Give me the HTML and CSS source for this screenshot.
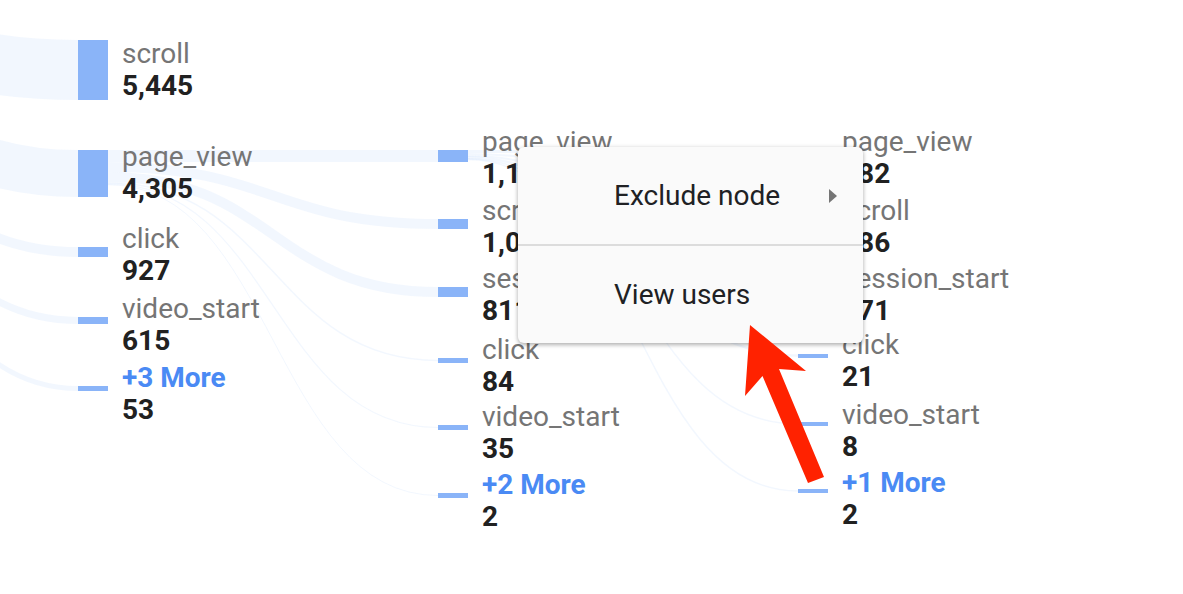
FILE: index.html
```html
<!DOCTYPE html>
<html lang="en">
<head>
  <meta charset="UTF-8">
  <title>Path exploration</title>
  <link rel="stylesheet" href="styles.css">
</head>
<body>
  <div class="canvas">
    <!-- links between steps -->
    <svg class="flows" width="1183" height="594" viewBox="0 0 1183 594">
      <!-- into step 1 -->
      <path d="M-273 8 C-97.5 8 -97.5 70 78 70" stroke-width="60"/>
      <path d="M-273 61.5 C-97.5 61.5 -97.5 173.5 78 173.5" stroke-width="47"/>
      <path d="M-273 90 C-97.5 90 -97.5 252 78 252" stroke-width="10"/>
      <path d="M-273 98.5 C-97.5 98.5 -97.5 320.5 78 320.5" stroke-width="7"/>
      <path d="M-273 104.5 C-97.5 104.5 -97.5 388.5 78 388.5" stroke-width="5"/>
      <!-- step 1 page_view -> step 2 -->
      <path d="M108 156 L438 156" stroke-width="12"/>
      <path d="M108 167 C273 167 273 224 438 224" stroke-width="10"/>
      <path d="M108 177 C273 177 273 292 438 292" stroke-width="10"/>
      <path d="M108 182.7 C273 182.7 273 360.5 438 360.5" stroke-width="1.5"/>
      <path d="M108 183.8 C273 183.8 273 427.5 438 427.5" stroke-width="1.2"/>
      <path d="M108 184.7 C273 184.7 273 495.5 438 495.5" stroke-width="1"/>
      <!-- step 2 page_view -> step 3 -->
      <path d="M468 151.5 C633 151.5 633 152 798 152" stroke-width="3"/>
      <path d="M468 154 C633 154 633 221 798 221" stroke-width="2"/>
      <path d="M468 156 C633 156 633 289 798 289" stroke-width="2"/>
      <path d="M468 157.5 C633 157.5 633 355.5 798 355.5" stroke-width="2.5"/>
      <path d="M468 158.7 C633 158.7 633 424 798 424" stroke-width="1.5"/>
      <path d="M468 159.5 C633 159.5 633 491 798 491" stroke-width="1.5"/>
    </svg>

    <!-- step 1 -->
    <div class="node col-1" style="top:38px">
      <span class="bar" style="margin-top:2px;height:60px"></span>
      <div class="text"><div class="name">scroll</div><div class="count">5,445</div></div>
    </div>
    <div class="node col-1" style="top:141px">
      <span class="bar" style="margin-top:9px;height:47px"></span>
      <div class="text"><div class="name">page_view</div><div class="count">4,305</div></div>
    </div>
    <div class="node col-1" style="top:223px">
      <span class="bar" style="margin-top:24px;height:10px"></span>
      <div class="text"><div class="name">click</div><div class="count">927</div></div>
    </div>
    <div class="node col-1" style="top:293px">
      <span class="bar" style="margin-top:24px;height:7px"></span>
      <div class="text"><div class="name">video_start</div><div class="count">615</div></div>
    </div>
    <div class="node col-1 more" style="top:362px">
      <span class="bar" style="margin-top:24px;height:5px"></span>
      <div class="text"><div class="name">+3 More</div><div class="count">53</div></div>
    </div>

    <!-- step 2 -->
    <div class="node col-2" style="top:126px">
      <span class="bar" style="margin-top:24px;height:12px"></span>
      <div class="text"><div class="name">page_view</div><div class="count">1,184</div></div>
    </div>
    <div class="node col-2" style="top:195px">
      <span class="bar" style="margin-top:24px;height:10px"></span>
      <div class="text"><div class="name">scroll</div><div class="count">1,047</div></div>
    </div>
    <div class="node col-2" style="top:263px">
      <span class="bar" style="margin-top:24px;height:10px"></span>
      <div class="text"><div class="name">session_start</div><div class="count">811</div></div>
    </div>
    <div class="node col-2" style="top:334px">
      <span class="bar" style="margin-top:24px;height:5px"></span>
      <div class="text"><div class="name">click</div><div class="count">84</div></div>
    </div>
    <div class="node col-2" style="top:401px">
      <span class="bar" style="margin-top:24px;height:5px"></span>
      <div class="text"><div class="name">video_start</div><div class="count">35</div></div>
    </div>
    <div class="node col-2 more" style="top:469px">
      <span class="bar" style="margin-top:24px;height:5px"></span>
      <div class="text"><div class="name">+2 More</div><div class="count">2</div></div>
    </div>

    <!-- step 3 -->
    <div class="node col-3" style="top:126px">
      <span class="bar" style="margin-top:24px;height:4px"></span>
      <div class="text"><div class="name">page_view</div><div class="count">282</div></div>
    </div>
    <div class="node col-3" style="top:195px">
      <span class="bar" style="margin-top:24px;height:4px"></span>
      <div class="text"><div class="name">scroll</div><div class="count">186</div></div>
    </div>
    <div class="node col-3" style="top:263px">
      <span class="bar" style="margin-top:24px;height:4px"></span>
      <div class="text"><div class="name">session_start</div><div class="count">171</div></div>
    </div>
    <div class="node col-3" style="top:329px">
      <span class="bar" style="margin-top:25px;height:4px"></span>
      <div class="text"><div class="name">click</div><div class="count">21</div></div>
    </div>
    <div class="node col-3" style="top:399px">
      <span class="bar" style="margin-top:23px;height:4px"></span>
      <div class="text"><div class="name">video_start</div><div class="count">8</div></div>
    </div>
    <div class="node col-3 more" style="top:467px">
      <span class="bar" style="margin-top:22px;height:4px"></span>
      <div class="text"><div class="name">+1 More</div><div class="count">2</div></div>
    </div>

    <!-- context menu -->
    <div class="menu">
      <div class="menu-item">Exclude node <span class="submenu"></span></div>
      <div class="menu-divider"></div>
      <div class="menu-item">View users</div>
    </div>

    <svg class="pointer" width="1183" height="594" viewBox="0 0 1183 594">
      <polygon points="750,325 806,371 779,369 824,477 808,483 762.5,376 745,396"/>
    </svg>
  </div>
</body>
</html>
```

FILE: styles.css
```css
body { margin: 0; background: #fff; font-family: Roboto, "Liberation Sans", sans-serif; }
.canvas { position: relative; width: 1183px; height: 594px; overflow: hidden; }
.flows, .pointer { position: absolute; left: 0; top: 0; }
.flows path { fill: none; stroke: #8ab4f8; stroke-opacity: .11; }
.pointer polygon { fill: #ff2200; }

.node { position: absolute; display: flex; align-items: flex-start; font-size: 28px; line-height: 32px; white-space: nowrap; }
.col-1 { left: 78px; }
.col-2 { left: 438px; }
.col-3 { left: 798px; }
.bar { flex: none; width: 30px; margin-right: 14px; background: #8ab4f8; }
.name { color: #757575; }
.count { color: #212121; font-weight: 700; }
.more .name { color: #4a8af4; font-weight: 700; }

.menu { position: absolute; left: 518px; top: 147px; width: 345px; background: #fafafa; border-radius: 6px; box-shadow: 0 2px 4px rgba(0,0,0,.28), 0 0 5px rgba(0,0,0,.08); }
.menu-item { display: flex; align-items: center; justify-content: space-between; height: 97px; padding: 0 26px 0 96px; font-size: 28px; line-height: 32px; color: #202124; }
.menu-divider { height: 2px; background: #dcdcdc; }
.submenu { width: 0; height: 0; border-left: 8px solid #757575; border-top: 7.5px solid transparent; border-bottom: 7.5px solid transparent; }
```
